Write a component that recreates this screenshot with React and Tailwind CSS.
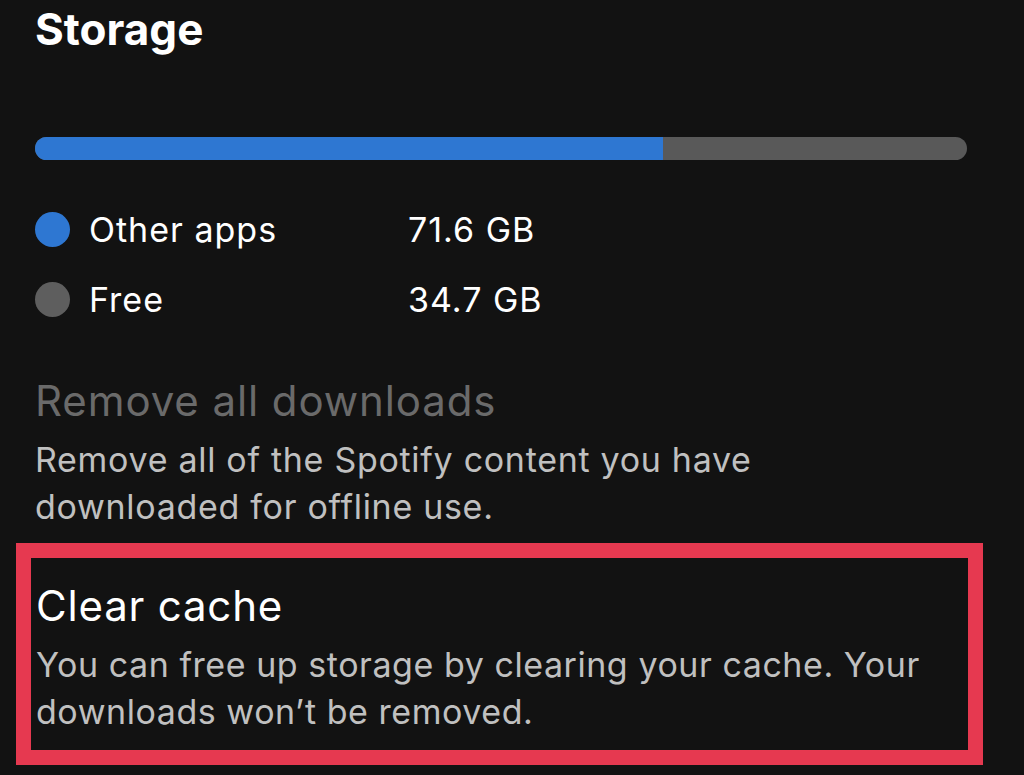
export default function App() {
  const used = 67.4;

  return (
    <div className="min-h-[775px] w-full bg-[#121212] px-[35px] pt-[7px] font-['Inter','Liberation_Sans',sans-serif] text-white">
      <h1 className="text-[44px] font-bold leading-[44px]">Storage</h1>

      <div className="mt-[86px] flex h-[23px] w-[932px] overflow-hidden rounded-full bg-[#595959]">
        <div className="h-full bg-[#2e77d2]" style={{ width: `${used}%` }} />
      </div>

      <div className="mt-[52px] flex flex-col gap-[35px] text-[34px] leading-[35px] tracking-[1px]">
        <div className="flex h-[35px] items-center">
          <span className="h-[35px] w-[35px] rounded-full bg-[#2e77d2]" />
          <span className="ml-[19px] w-[319px]">Other apps</span>
          <span>71.6 GB</span>
        </div>
        <div className="flex h-[35px] items-center">
          <span className="h-[35px] w-[35px] rounded-full bg-[#5e5e5e]" />
          <span className="ml-[19px] w-[319px]">Free</span>
          <span>34.7 GB</span>
        </div>
      </div>

      <div className="mt-[60px]">
        <h2 className="text-[42px] leading-[48px] tracking-[0.9px] text-[#6a6a6a]">Remove all downloads</h2>
        <p className="mt-[11px] max-w-[880px] text-[34px] leading-[47px] tracking-[0.7px] text-[#c0c0c0]">
          Remove all of the Spotify content you have downloaded for offline use.
        </p>
      </div>

      <div className="-ml-[19px] mt-[13px] w-[967px] border-[15px] border-[#e63950] pb-[15px] pl-[5px] pt-[24px]">
        <h2 className="text-[42px] leading-[48px] tracking-[0.8px] text-white">Clear cache</h2>
        <p className="mt-[11px] text-[34px] leading-[47px] tracking-[0.55px] text-[#c0c0c0]">
          You can free up storage by clearing your cache. Your downloads won’t be removed.
        </p>
      </div>
    </div>
  );
}
